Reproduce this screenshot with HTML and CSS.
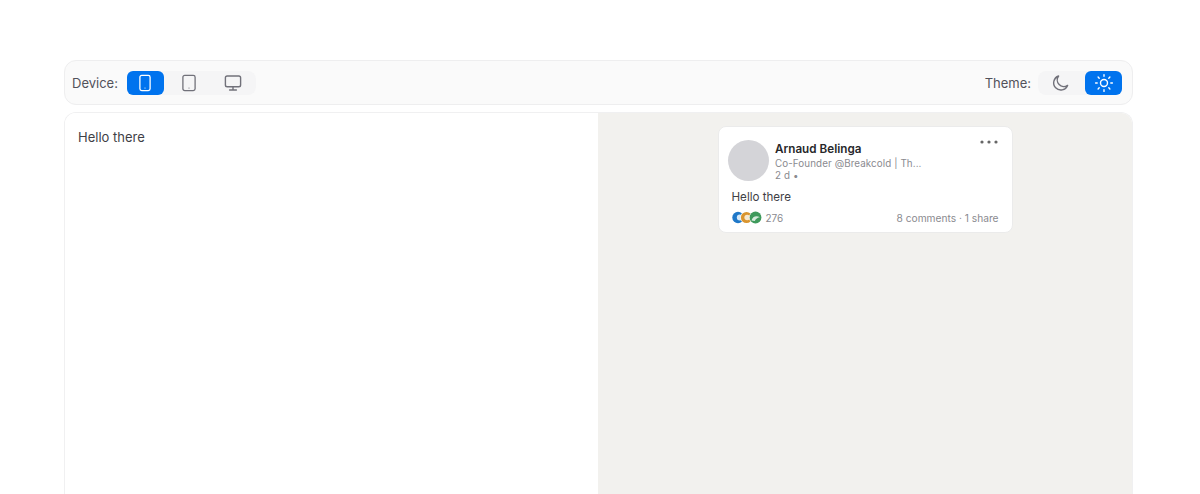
FILE: index.html
```html
<!DOCTYPE html>
<html lang="en">
<head>
<meta charset="utf-8">
<title>Post preview</title>
<link rel="stylesheet" href="styles.css">
</head>
<body>
<main class="page">
  <div class="toolbar">
    <div class="group device-group">
      <span class="label">Device:</span>
      <div class="segmented device">
        <button class="seg active"><svg width="20" height="20" viewBox="0 0 20 20" fill="none" stroke="currentColor" stroke-width="1.3"><rect x="4.9" y="2.4" width="10.2" height="15.2" rx="1.8"/><circle cx="10" cy="15" r=".6" fill="currentColor" stroke="none"/></svg></button>
        <button class="seg"><svg width="20" height="20" viewBox="0 0 20 20" fill="none" stroke="currentColor" stroke-width="1.3"><rect x="3.9" y="2.4" width="12.2" height="15.2" rx="1.8"/><circle cx="10" cy="15" r=".6" fill="currentColor" stroke="none"/></svg></button>
        <button class="seg"><svg width="20" height="20" viewBox="0 0 20 20" fill="none" stroke="currentColor" stroke-width="1.4" stroke-linecap="round"><rect x="2.4" y="3" width="15.2" height="10.8" rx="1.8"/><path d="M10 13.8v3M6.6 17h6.8"/></svg></button>
      </div>
    </div>
    <div class="group theme-group">
      <span class="label">Theme:</span>
      <div class="segmented theme">
        <button class="seg"><svg width="20" height="20" viewBox="0 0 20 20" fill="none" stroke="currentColor" stroke-width="1.4" stroke-linecap="round" stroke-linejoin="round"><path d="M8.6 3a7.2 7.2 0 1 0 9 9.4A6.6 6.6 0 0 1 8.6 3z"/></svg></button>
        <button class="seg active"><svg width="20" height="20" viewBox="0 0 20 20" fill="none" stroke="currentColor" stroke-width="1.4" stroke-linecap="round"><circle cx="10" cy="10" r="3.5"/><path d="M10 1.6v1.6M10 16.8v1.6M1.6 10h1.6M16.8 10h1.6M4.1 4.1l1.1 1.1M14.8 14.8l1.1 1.1M4.1 15.9l1.1-1.1M14.8 5.2l1.1-1.1"/></svg></button>
      </div>
    </div>
  </div>
  <div class="workspace">
    <div class="editor">Hello there</div>
    <div class="preview">
      <article class="post">
        <header class="post-head">
          <div class="avatar"></div>
          <div class="meta">
            <div class="name">Arnaud Belinga</div>
            <div class="sub">Co-Founder @Breakcold | Th...</div>
            <div class="sub">2 d •</div>
          </div>
          <svg class="more" width="18" height="4" viewBox="0 0 18 4" fill="currentColor"><circle cx="2" cy="2" r="1.6"/><circle cx="9" cy="2" r="1.6"/><circle cx="16" cy="2" r="1.6"/></svg>
        </header>
        <p class="body">Hello there</p>
        <footer class="post-foot">
          <div class="reactions">
            <svg width="30" height="13" viewBox="0 0 30 13">
              <circle cx="6" cy="6.5" r="5.7" fill="#1f78c8"/><circle cx="7.8" cy="6.5" r="3" fill="#d5e8f7"/>
              <circle cx="14.5" cy="6.5" r="6.2" fill="#fff"/><circle cx="14.5" cy="6.5" r="5.6" fill="#d9952f"/><circle cx="15.2" cy="6.5" r="2.8" fill="#f7e8cf"/>
              <circle cx="23.5" cy="6.5" r="6.5" fill="#fff"/><circle cx="23.5" cy="6.5" r="5.9" fill="#3f9a5c"/><path d="M19.5 9.5c1-4.2 5-5.4 8.500-3.200-2.300.2-4.300 1.600-5.200 3.800z" fill="#d7ebdd"/>
            </svg>
            <span class="count">276</span>
          </div>
          <span class="stats">8 comments · 1 share</span>
        </footer>
      </article>
    </div>
  </div>
</main>
</body>
</html>
```
FILE: styles.css
```css
* { box-sizing: border-box; }
html, body { margin: 0; height: 100%; overflow: hidden; background: #fff; }
body { font-family: Inter, "Liberation Sans", sans-serif; color: #3f3f46; }
.page { padding: 60px 67px 0 64px; display: flex; flex-direction: column; gap: 7px; height: 494px; }
.toolbar { height: 45px; flex: none; display: flex; justify-content: space-between; align-items: center; padding: 0 10px 0 7px; background: #fafafa; border: 1px solid #eeeeef; border-radius: 12px; }
.group { display: flex; align-items: center; }
.device-group { gap: 9px; }
.theme-group { gap: 7px; }
.label { font-size: 13px; color: #52525b; }
.segmented { display: flex; background: #f5f5f6; border-radius: 8px; }
.segmented.device { padding-right: 4px; }
.segmented.theme { padding-left: 3px; }
.seg { width: 37px; height: 24px; margin: 0; padding: 0; border: 0; background: transparent; border-radius: 6px; color: #71717a; display: flex; align-items: center; justify-content: center; }
.segmented .seg + .seg { margin-left: 7px; }
.seg.active { background: #0073ee; color: #fff; }
.workspace { flex: 1; display: grid; grid-template-columns: 533px 1fr; border: 1px solid #f0f0f1; border-bottom: 0; border-radius: 12px 12px 0 0; overflow: hidden; min-height: 0; }
.editor { padding: 16px 13px; font-size: 13px; line-height: 17px; color: #3f3f46; background: #fff; }
.preview { background: #f2f1ee; padding: 13px 0 0; display: flex; justify-content: center; align-items: flex-start; }
.post { width: 295px; height: 107px; background: #fff; border: 1px solid #ebebeb; border-radius: 8px; padding: 13px 13px 0 9px; display: flex; flex-direction: column; }
.post-head { display: flex; align-items: flex-start; position: relative; }
.avatar { width: 41px; height: 41px; border-radius: 50%; background: #d4d4d8; flex: none; }
.meta { margin-left: 6.5px; display: flex; flex-direction: column; }
.name { font-size: 11.7px; line-height: 16px; font-weight: 600; color: #27272a; margin: 1px 0; }
.sub { font-size: 9.8px; line-height: 12px; color: #8a8a8f; letter-spacing: .1px; }
.more { position: absolute; right: 1px; top: 0; color: #666; }
.body { margin: 7px 0 0 4px; font-size: 11.6px; line-height: 16px; color: #3f3f46; }
.post-foot { margin: 6px 0 0 4px; display: flex; align-items: center; justify-content: space-between; }
.reactions { display: flex; align-items: center; }
.count { margin-left: 4px; font-size: 10px; color: #8a8a8f; }
.stats { font-size: 10.2px; color: #8a8a8f; }
```
